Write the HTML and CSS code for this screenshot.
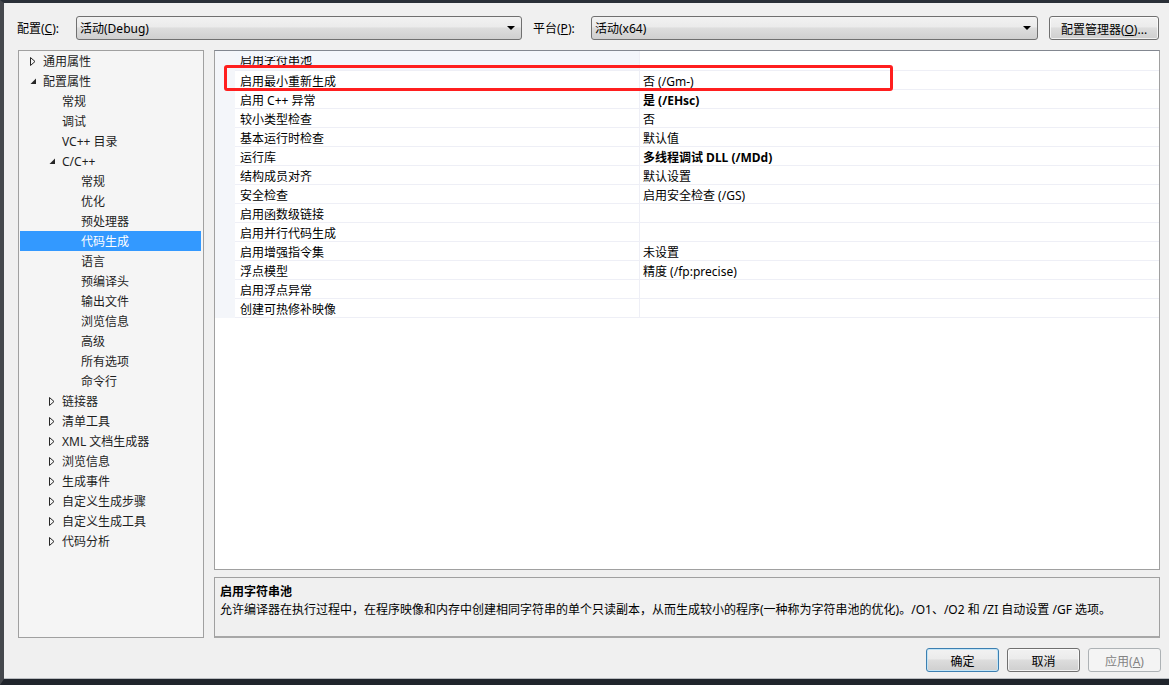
FILE: index.html
```html
<!DOCTYPE html>
<html lang="zh-CN">
<head>
<meta charset="utf-8">
<title>代码生成 属性页</title>
<link rel="stylesheet" href="styles.css">
</head>
<body>
<div class="window">
  <div class="toolbar">
    <span class="lbl lbl-config">配置(<u>C</u>):</span>
    <div class="combo combo-config"><span class="combo-text">活动(Debug)</span><span class="combo-arrow"></span></div>
    <span class="lbl lbl-platform">平台(<u>P</u>):</span>
    <div class="combo combo-platform"><span class="combo-text">活动(x64)</span><span class="combo-arrow"></span></div>
    <button class="btn btn-manager">配置管理器(<u>O</u>)...</button>
  </div>

  <div class="main">
    <ul class="tree">
      <li class="node lvl0"><span class="exp collapsed"><svg width="6" height="9" viewBox="0 0 6 9"><path d="M0.5 0.5 L5 4.5 L0.5 8.5 Z" fill="none" stroke="#262626" stroke-width="1"/></svg></span>通用属性</li>
      <li class="node lvl0"><span class="exp expanded"><svg width="7" height="7" viewBox="0 0 7 7"><path d="M6 0.5 L6 6 L0.5 6 Z" fill="#262626"/></svg></span>配置属性</li>
      <li class="node lvl1"><span class="exp"></span>常规</li>
      <li class="node lvl1"><span class="exp"></span>调试</li>
      <li class="node lvl1"><span class="exp"></span>VC++ 目录</li>
      <li class="node lvl1"><span class="exp expanded"><svg width="7" height="7" viewBox="0 0 7 7"><path d="M6 0.5 L6 6 L0.5 6 Z" fill="#262626"/></svg></span>C/C++</li>
      <li class="node lvl2"><span class="exp"></span>常规</li>
      <li class="node lvl2"><span class="exp"></span>优化</li>
      <li class="node lvl2"><span class="exp"></span>预处理器</li>
      <li class="node lvl2 selected"><span class="exp"></span>代码生成</li>
      <li class="node lvl2"><span class="exp"></span>语言</li>
      <li class="node lvl2"><span class="exp"></span>预编译头</li>
      <li class="node lvl2"><span class="exp"></span>输出文件</li>
      <li class="node lvl2"><span class="exp"></span>浏览信息</li>
      <li class="node lvl2"><span class="exp"></span>高级</li>
      <li class="node lvl2"><span class="exp"></span>所有选项</li>
      <li class="node lvl2"><span class="exp"></span>命令行</li>
      <li class="node lvl1"><span class="exp collapsed"><svg width="6" height="9" viewBox="0 0 6 9"><path d="M0.5 0.5 L5 4.5 L0.5 8.5 Z" fill="none" stroke="#262626" stroke-width="1"/></svg></span>链接器</li>
      <li class="node lvl1"><span class="exp collapsed"><svg width="6" height="9" viewBox="0 0 6 9"><path d="M0.5 0.5 L5 4.5 L0.5 8.5 Z" fill="none" stroke="#262626" stroke-width="1"/></svg></span>清单工具</li>
      <li class="node lvl1"><span class="exp collapsed"><svg width="6" height="9" viewBox="0 0 6 9"><path d="M0.5 0.5 L5 4.5 L0.5 8.5 Z" fill="none" stroke="#262626" stroke-width="1"/></svg></span>XML 文档生成器</li>
      <li class="node lvl1"><span class="exp collapsed"><svg width="6" height="9" viewBox="0 0 6 9"><path d="M0.5 0.5 L5 4.5 L0.5 8.5 Z" fill="none" stroke="#262626" stroke-width="1"/></svg></span>浏览信息</li>
      <li class="node lvl1"><span class="exp collapsed"><svg width="6" height="9" viewBox="0 0 6 9"><path d="M0.5 0.5 L5 4.5 L0.5 8.5 Z" fill="none" stroke="#262626" stroke-width="1"/></svg></span>生成事件</li>
      <li class="node lvl1"><span class="exp collapsed"><svg width="6" height="9" viewBox="0 0 6 9"><path d="M0.5 0.5 L5 4.5 L0.5 8.5 Z" fill="none" stroke="#262626" stroke-width="1"/></svg></span>自定义生成步骤</li>
      <li class="node lvl1"><span class="exp collapsed"><svg width="6" height="9" viewBox="0 0 6 9"><path d="M0.5 0.5 L5 4.5 L0.5 8.5 Z" fill="none" stroke="#262626" stroke-width="1"/></svg></span>自定义生成工具</li>
      <li class="node lvl1"><span class="exp collapsed"><svg width="6" height="9" viewBox="0 0 6 9"><path d="M0.5 0.5 L5 4.5 L0.5 8.5 Z" fill="none" stroke="#262626" stroke-width="1"/></svg></span>代码分析</li>
    </ul>

    <div class="right">
      <div class="grid">
        <div class="rows">
          <div class="row first current"><div class="gutter"></div><div class="name"><span class="clip">启用字符串池</span></div><div class="value"></div></div>
          <div class="row"><div class="gutter"></div><div class="name">启用最小重新生成</div><div class="value">否 (/Gm-)</div></div>
          <div class="row"><div class="gutter"></div><div class="name">启用 C++ 异常</div><div class="value bold">是 (/EHsc)</div></div>
          <div class="row"><div class="gutter"></div><div class="name">较小类型检查</div><div class="value">否</div></div>
          <div class="row"><div class="gutter"></div><div class="name">基本运行时检查</div><div class="value">默认值</div></div>
          <div class="row"><div class="gutter"></div><div class="name">运行库</div><div class="value bold">多线程调试 DLL (/MDd)</div></div>
          <div class="row"><div class="gutter"></div><div class="name">结构成员对齐</div><div class="value">默认设置</div></div>
          <div class="row"><div class="gutter"></div><div class="name">安全检查</div><div class="value">启用安全检查 (/GS)</div></div>
          <div class="row"><div class="gutter"></div><div class="name">启用函数级链接</div><div class="value"></div></div>
          <div class="row"><div class="gutter"></div><div class="name">启用并行代码生成</div><div class="value"></div></div>
          <div class="row"><div class="gutter"></div><div class="name">启用增强指令集</div><div class="value">未设置</div></div>
          <div class="row"><div class="gutter"></div><div class="name">浮点模型</div><div class="value">精度 (/fp:precise)</div></div>
          <div class="row"><div class="gutter"></div><div class="name">启用浮点异常</div><div class="value"></div></div>
          <div class="row"><div class="gutter"></div><div class="name">创建可热修补映像</div><div class="value"></div></div>
        </div>
        <div class="mark"></div>
      </div>
      <div class="desc">
        <div class="desc-title">启用字符串池</div>
        <div class="desc-text">允许编译器在执行过程中，在程序映像和内存中创建相同字符串的单个只读副本，从而生成较小的程序(一种称为字符串池的优化)。/O1、/O2 和 /ZI 自动设置 /GF 选项。</div>
      </div>
    </div>
  </div>

  <div class="footer">
    <button class="btn btn-default">确定</button>
    <button class="btn">取消</button>
    <button class="btn btn-disabled" disabled>应用(<u>A</u>)</button>
  </div>
</div>
</body>
</html>
```

FILE: styles.css
```css
* { box-sizing: border-box; }

html, body {
  margin: 0;
  padding: 0;
  background: #f0f0f0;
}

body {
  font-family: "Noto Sans", "Noto Sans CJK SC", sans-serif;
  font-size: 12px;
  color: #000;
  overflow: hidden;
}

u { text-decoration: underline; text-underline-offset: 1px; }

.window {
  width: 1169px;
  height: 685px;
  display: flex;
  flex-direction: column;
  background: #f0f0f0;
  border-top: 3px solid #2a3038;
  border-left: 4px solid #45484d;
  border-bottom: 6px solid #20252c;
  box-shadow: inset 0 -1px 0 #b9bcc0;
}

/* configuration / platform selectors */
.toolbar {
  display: flex;
  align-items: center;
  height: 24px;
  margin-top: 13px;
  padding-left: 13px;
}

.lbl {
  line-height: 22px;
  padding-top: 2px;
  white-space: nowrap;
}
.lbl-config { width: 59px; }
.lbl-platform { width: 58px; margin-left: 11px; }

.combo {
  height: 24px;
  display: flex;
  align-items: center;
  justify-content: space-between;
  border: 1px solid #707070;
  border-radius: 3px;
  background: linear-gradient(#f2f2f2 0%, #ebebeb 45%, #dddddd 50%, #cfcfcf 100%);
  padding: 0 6px 0 3px;
}
.combo-config { width: 446px; }
.combo-platform { width: 447px; }
.combo-text { line-height: 20px; padding-top: 2px; }
.combo-arrow {
  width: 0;
  height: 0;
  border-left: 4px solid transparent;
  border-right: 4px solid transparent;
  border-top: 4px solid #000;
}

.btn {
  font: inherit;
  color: #000;
  height: 24px;
  padding: 2px 0 0;
  border: 1px solid #707070;
  border-radius: 3px;
  background: linear-gradient(#f2f2f2 0%, #ebebeb 45%, #dddddd 50%, #cfcfcf 100%);
  box-shadow: inset 0 0 0 1px rgba(255,255,255,0.7);
}
.btn-manager {
  width: 110px;
  margin-left: 11px;
}

/* main area */
.main {
  display: flex;
  margin-top: 10px;
  height: 588px;
  padding-left: 14px;
}

.tree {
  list-style: none;
  margin: 0;
  padding: 0 1px;
  width: 186px;
  height: 588px;
  border: 1px solid #a0a0a0;
  background: #f5f5f5;
}

.node {
  display: flex;
  align-items: center;
  height: 20px;
  line-height: 18px;
  padding-top: 2px;
  white-space: nowrap;
  color: #1e1e1e;
}
.node .exp {
  width: 19px;
  height: 18px;
  display: flex;
  align-items: center;
  justify-content: center;
  flex: none;
}
.lvl0 { padding-left: 4px; }
.lvl1 { padding-left: 23px; }
.lvl2 { padding-left: 42px; }
.exp.collapsed svg { margin-left: -1px; margin-top: -1px; }
.exp.expanded svg { margin-top: -2px; }

.node.selected {
  background: #3399ff;
  color: #fff;
  margin-right: 1px;
}

.right {
  display: flex;
  flex-direction: column;
  margin-left: 10px;
  width: 946px;
}

/* property grid */
.grid {
  position: relative;
  height: 521px;
  border: 1px solid #a0a0a0;
  border-top-color: #828790;
  background: #fff;
}

.rows {
  display: flex;
  flex-direction: column;
}

.row {
  display: flex;
  height: 19px;
}
.row.first { height: 20px; }

.gutter {
  width: 20px;
  flex: none;
  background: #f4f6fa;
}

.name, .value {
  border-bottom: 1px solid #eeeff6;
  line-height: 15px;
  padding-top: 3px;
  white-space: nowrap;
}
.name {
  width: 405px;
  flex: none;
  padding-left: 5px;
  border-right: 1px solid #eeeff6;
}
.value {
  flex: 1;
  padding-left: 3px;
}
.bold { font-weight: bold; }

.row.first .name,
.row.first .value { line-height: 17px; padding-top: 0; }
.row.current .name { background: #f3f6fb; }

.clip {
  display: inline-block;
  clip-path: inset(5px 0 0 0);
}

/* highlight drawn over the grid */
.mark {
  position: absolute;
  left: 9px;
  top: 14px;
  width: 669px;
  height: 26px;
  border: 3px solid #ff1f1f;
  border-radius: 3px;
  pointer-events: none;
}

/* description pane */
.desc {
  margin-top: 7px;
  height: 61px;
  border: 1px solid #a0a0a0;
  border-bottom: 2px solid #a7a7a7;
  background: #f0f0f0;
  padding: 5px 5px 0;
  line-height: 17px;
}
.desc-title { font-weight: bold; }
.desc-text { white-space: nowrap; padding-top: 1px; }

/* dialog buttons */
.footer {
  display: flex;
  justify-content: flex-end;
  gap: 8px;
  margin-top: 10px;
  padding-right: 8px;
}
.footer .btn {
  width: 73px;
  height: 24px;
}
.btn-default {
  border-color: #3c7fb1;
  box-shadow: inset 0 0 0 1px #c2e4f6;
}
.btn-disabled {
  color: #838383;
  border-color: #adb2b5;
  background: #f4f4f4;
  box-shadow: none;
}
```
